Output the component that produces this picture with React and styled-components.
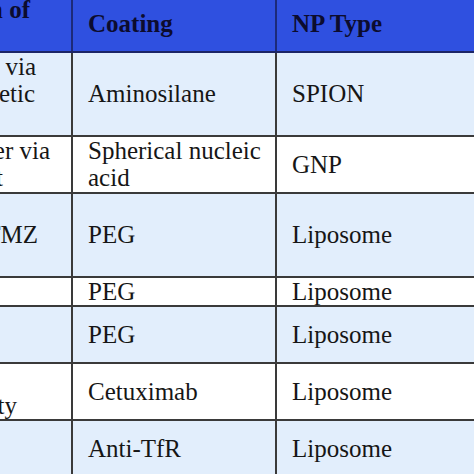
import React from 'react';
import styled, { createGlobalStyle } from 'styled-components';

const GlobalStyle = createGlobalStyle`
  html, body {
    margin: 0;
    padding: 0;
    background: #ffffff;
    overflow: hidden;
  }
`;

const Frame = styled.div`
  width: 474px;
  height: 474px;
  overflow: hidden;
  background: #ffffff;
`;

const Table = styled.table`
  margin: -4px 0 0 -229px;
  width: 804px;
  table-layout: fixed;
  border-collapse: collapse;
  font-family: 'Liberation Serif', 'Times New Roman', serif;
  font-size: 25px;
  line-height: 27.4px;
  color: #161616;
`;

const HeadRow = styled.tr`
  background: #2f50e0;
`;

const Row = styled.tr`
  background: ${(p) => (p.$tinted ? '#e2eefc' : '#ffffff')};
`;

const HeadCell = styled.th`
  padding: 0 8px 0 ${(p) => (p.$first ? 0 : 15)}px;
  text-align: left;
  vertical-align: middle;
  font-weight: bold;
  color: #0c0c2e;
  border-left: 2px solid #1c2a7a;
  border-right: 2px solid #1c2a7a;
  border-bottom: 2px solid #1c2566;
`;

const Cell = styled.td`
  padding: 0 8px 0 ${(p) => (p.$first ? 0 : 15)}px;
  padding-right: ${(p) => (p.$first ? 0 : 8)}px;
  vertical-align: middle;
  border: 2px solid #3a3a3a;
`;

const Line = styled.span`
  display: block;
  white-space: nowrap;
  text-align: right;
  padding-right: ${(p) => p.$gap}px;
`;

const rows = [
  {
    lines: [
      ['Transport via', 35],
      ['magnetic', 36],
      ['field', 80],
    ],
    coating: 'Aminosilane',
    type: 'SPION',
  },
  {
    lines: [
      ['Nucleic acid carrier via', 21],
      ['BBB transport', 68],
    ],
    coating: 'Spherical nucleic acid',
    type: 'GNP',
  },
  {
    lines: [
      ['Co-delivery', 80],
      ['with TMZ', 33],
      ['drugs', 80],
    ],
    coating: 'PEG',
    type: 'Liposome',
  },
  {
    lines: [['Targeting', 80]],
    coating: 'PEG',
    type: 'Liposome',
  },
  {
    lines: [
      ['Drug', 80],
      ['release', 80],
    ],
    coating: 'PEG',
    type: 'Liposome',
  },
  {
    lines: [
      ['EGFR', 80],
      ['specificity', 54],
    ],
    coating: 'Cetuximab',
    type: 'Liposome',
  },
  {
    lines: [
      ['Receptor', 80],
      ['transcytosis', 80],
    ],
    coating: 'Anti-TfR',
    type: 'Liposome',
  },
];

const App = () => {
  return (
    <Frame>
      <GlobalStyle />
      <Table>
        <colgroup>
          <col style={{ width: 300 }} />
          <col style={{ width: 204 }} />
          <col style={{ width: 300 }} />
        </colgroup>
        <thead>
          <HeadRow>
            <HeadCell $first>
              <Line $gap={33}>Mechanism of</Line>
              <Line $gap={80}>action</Line>
            </HeadCell>
            <HeadCell>Coating</HeadCell>
            <HeadCell>NP Type</HeadCell>
          </HeadRow>
        </thead>
        <tbody>
          {rows.map((row, i) => (
            <Row key={i} $tinted={i % 2 === 0}>
              <Cell $first>
                {row.lines.map(([text, gap]) => (
                  <Line key={text} $gap={gap}>
                    {text}
                  </Line>
                ))}
              </Cell>
              <Cell>{row.coating}</Cell>
              <Cell>{row.type}</Cell>
            </Row>
          ))}
        </tbody>
      </Table>
    </Frame>
  );
};

export default App;
